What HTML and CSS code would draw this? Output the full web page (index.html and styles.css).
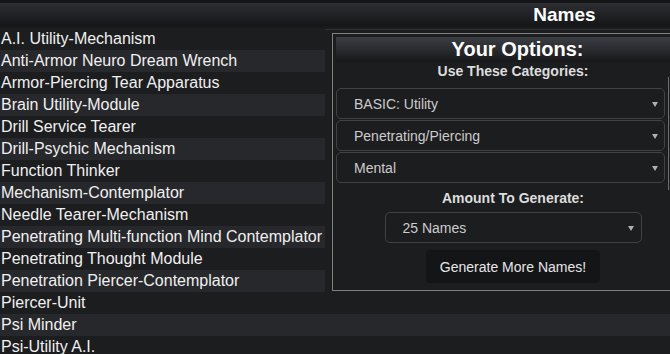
FILE: index.html
```html
<!DOCTYPE html>
<html>
<head>
<meta charset="utf-8">
<title>Names</title>
<link rel="stylesheet" href="styles.css">
</head>
<body>
<div class="page">
  <header class="topbar"><h1 class="title">Names</h1></header>
  <div class="content">
    <aside class="side">
      <div class="panel">
        <h2 class="panel-head">Your Options:</h2>
        <h3 class="label label-cats">Use These Categories:</h3>
        <div class="cats">
          <div class="sel"><select><option>BASIC: Utility</option></select></div>
          <div class="sel"><select><option>Penetrating/Piercing</option></select></div>
          <div class="sel"><select><option>Mental</option></select></div>
        </div>
        <h3 class="label label-amount">Amount To Generate:</h3>
        <div class="sel sel-amount"><select><option>25 Names</option></select></div>
        <button class="gen">Generate More Names!</button>
      </div>
    </aside>
    <ul class="names">
      <li>A.I. Utility-Mechanism</li>
      <li>Anti-Armor Neuro Dream Wrench</li>
      <li>Armor-Piercing Tear Apparatus</li>
      <li>Brain Utility-Module</li>
      <li>Drill Service Tearer</li>
      <li>Drill-Psychic Mechanism</li>
      <li>Function Thinker</li>
      <li>Mechanism-Contemplator</li>
      <li>Needle Tearer-Mechanism</li>
      <li>Penetrating Multi-function Mind Contemplator</li>
      <li>Penetrating Thought Module</li>
      <li>Penetration Piercer-Contemplator</li>
      <li>Piercer-Unit</li>
      <li>Psi Minder</li>
      <li>Psi-Utility A.I.</li>
    </ul>
  </div>
</div>
</body>
</html>
```

FILE: styles.css
```css
html, body {
  margin: 0;
  padding: 0;
  background: #1c1d1f;
  overflow: hidden;
}
body {
  font-family: "Liberation Sans", Arial, sans-serif;
  color: #f0f0f0;
}
.page {
  width: 670px;
  height: 354px;
  overflow: hidden;
}
.topbar {
  border-top: 3px solid #141517;
  border-bottom: 2px solid #18191b;
  height: 23px;
  background: linear-gradient(#2d2f33, #141517);
  padding-left: 459px;
  text-align: center;
}
.title {
  margin: 0;
  font-size: 19px;
  font-weight: 700;
  line-height: 23px;
  color: #ffffff;
}
.side {
  float: right;
  box-sizing: border-box;
  width: 360px;
  margin-right: -15px;
  margin-top: 1px;
  border-top: 1px solid #2e2f32;
  padding-top: 3px;
  padding-left: 7px;
}
.panel {
  width: 354px;
  border: 1px solid #808080;
  padding: 3px;
}
.panel-head {
  margin: 0;
  height: 25px;
  line-height: 25px;
  font-size: 20px;
  font-weight: 700;
  text-align: center;
  padding-left: 9px;
  color: #ffffff;
  background: linear-gradient(#3b3e42, #17181a);
}
.label {
  margin: 0;
  font-size: 14px;
  font-weight: 700;
  text-align: center;
  color: #dddddd;
}
.label-cats {
  padding-top: 4px;
  line-height: 11px;
}
.label-amount {
  line-height: 16px;
  margin-bottom: 6px;
}
.cats {
  width: 332px;
  border-right: 1px solid #6e6e6e;
  padding: 11px 0 7px;
}
.sel {
  position: relative;
  width: 329px;
  height: 31px;
  margin-bottom: 1px;
}
.cats .sel:last-child {
  margin-bottom: 0;
}
.sel select {
  -webkit-appearance: none;
  appearance: none;
  box-sizing: border-box;
  width: 100%;
  height: 100%;
  margin: 0;
  background: #1c1d1f;
  border: 1px solid #414246;
  border-radius: 5px;
  color: #cccccc;
  font-family: "Liberation Sans", Arial, sans-serif;
  font-size: 14px;
  padding: 0 0 0 17px;
  outline: none;
}
.sel::after {
  content: "";
  position: absolute;
  right: 7px;
  top: 50%;
  margin-top: -2px;
  border-left: 3px solid transparent;
  border-right: 3px solid transparent;
  border-top: 5px solid #b0b0b0;
  pointer-events: none;
}
.sel-amount {
  width: 257px;
  margin: 0 auto 7px;
}
.sel-amount::after {
  right: 8px;
}
.gen {
  display: block;
  margin: 0 auto 4px;
  height: 33px;
  padding: 0 14px;
  background: #141517;
  border: none;
  border-radius: 4px;
  color: #e6e6e6;
  font-family: "Liberation Sans", Arial, sans-serif;
  font-size: 14px;
}
.names {
  margin: 0;
  padding: 0;
  list-style: none;
}
.names li {
  display: flow-root;
  height: 22px;
  line-height: 22px;
  padding-left: 1px;
  font-size: 16px;
  color: #f0f0f0;
  white-space: nowrap;
}
.names li:nth-child(even) {
  background: #27282b;
}
```
